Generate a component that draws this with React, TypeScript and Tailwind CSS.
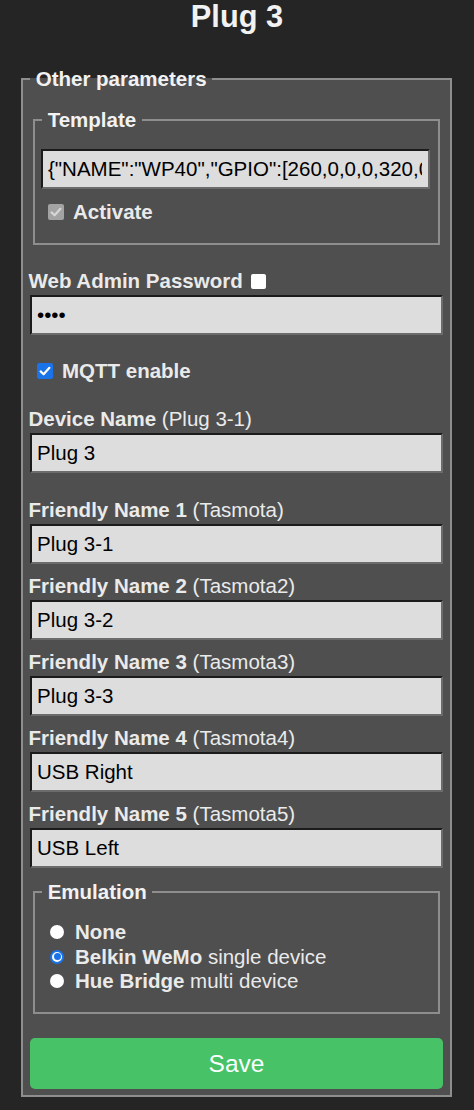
import React from 'react';

const CheckIcon = ({ stroke }: { stroke: string }) => (
  <svg viewBox="0 0 16 16" className="w-full h-full">
    <path d="M3.6 8.4 L6.6 11.3 L12.4 4.8" stroke={stroke} strokeWidth="2.2" fill="none" strokeLinecap="round" strokeLinejoin="round" />
  </svg>
);

const TextInput = ({ value, type = 'text' }: { value: string; type?: string }) => (
  <input
    type={type}
    readOnly
    value={value}
    className="block w-full h-[40px] bg-[#dddddd] text-black text-[20.5px] pl-[5px] pr-[6px] border-2 border-t-[#1b1b1b] border-l-[#1b1b1b] border-b-[#6c6c6c] border-r-[#6c6c6c] outline-none font-['Liberation_Sans',Arial,sans-serif]"
  />
);

const Field = ({ bold, normal, value, top }: { bold: string; normal: string; value: string; top: string }) => (
  <div className={top}>
    <div className="leading-[24px] h-[24px] -ml-[1.5px]">
      <b>{bold}</b> {normal}
    </div>
    <div className="mt-[2px]">
      <TextInput value={value} />
    </div>
  </div>
);

const Radio = ({ checked }: { checked?: boolean }) =>
  checked ? (
    <span className="w-[14px] h-[14px] rounded-full border-[2px] border-[#1a73e8] bg-white flex items-center justify-center shrink-0">
      <span className="w-[7px] h-[7px] rounded-full bg-[#1a73e8]" />
    </span>
  ) : (
    <span className="w-[14px] h-[14px] rounded-full bg-white shrink-0" />
  );

export default function App() {
  return (
    <div className="min-h-[1110px] bg-[#252525] text-[#eaeaea] text-[20.5px] font-['Liberation_Sans',Arial,sans-serif]">
      <h2 className="text-center text-[30.75px] font-bold leading-[34px] text-[#f2f2f2]">Plug 3</h2>

      <fieldset className="mt-[33px] ml-[21px] w-[431px] border-2 border-[#8e8e8e] bg-[#4f4f4f] px-[7px] pb-[6px]">
        <legend className="font-bold leading-[24px] text-[#f2f2f2]">{'\u00a0Other parameters\u00a0'}</legend>

        <fieldset className="mt-[17px] mx-[3px] border-2 border-[#8e8e8e] pl-[6px] pr-[8px] pt-[17px] pb-[19px]">
          <legend className="font-bold leading-[24px] text-[#f2f2f2] ml-[1px]">{'\u00a0Template\u00a0'}</legend>
          <TextInput value={'{"NAME":"WP40","GPIO":[260,0,0,0,320,0,0,0,224,32,0,0,0,0],"FLAG":0,"BASE":18}'} />
          <div className="mt-[11px] h-[24px] flex items-center">
            <span className="ml-[7px] w-[16px] h-[16px] rounded-[2px] bg-[#a3a3a3] shrink-0">
              <CheckIcon stroke="#d6d6d6" />
            </span>
            <b className="ml-[9px] leading-[24px]">Activate</b>
          </div>
        </fieldset>

        <div className="mt-[24px] h-[24px] flex items-center leading-[24px] -ml-[1.5px]">
          <b>Web Admin Password</b>
          <span className="ml-[8px] w-[15px] h-[15px] rounded-[2px] bg-white shrink-0" />
        </div>
        <div className="mt-[2px]">
          <TextInput type="password" value="abcd" />
        </div>

        <div className="mt-[24px] h-[24px] flex items-center">
          <span className="ml-[7px] w-[16px] h-[16px] rounded-[2px] bg-[#1a73e8] shrink-0">
            <CheckIcon stroke="#ffffff" />
          </span>
          <b className="ml-[9px] leading-[24px]">MQTT enable</b>
        </div>

        <Field top="mt-[24px]" bold="Device Name" normal="(Plug 3-1)" value="Plug 3" />
        <Field top="mt-[25px]" bold="Friendly Name 1" normal="(Tasmota)" value="Plug 3-1" />
        <Field top="mt-[10px]" bold="Friendly Name 2" normal="(Tasmota2)" value="Plug 3-2" />
        <Field top="mt-[10px]" bold="Friendly Name 3" normal="(Tasmota3)" value="Plug 3-3" />
        <Field top="mt-[10px]" bold="Friendly Name 4" normal="(Tasmota4)" value="USB Right" />
        <Field top="mt-[10px]" bold="Friendly Name 5" normal="(Tasmota5)" value="USB Left" />

        <fieldset className="mt-[12px] mx-[3px] border-2 border-[#8e8e8e] pl-[6px] pr-[8px] pt-[16px] pb-[18px]">
          <legend className="font-bold leading-[24px] text-[#f2f2f2] ml-[1px]">{'\u00a0Emulation\u00a0'}</legend>
          {[
            { b: 'None', n: '', c: false },
            { b: 'Belkin WeMo', n: 'single device', c: true },
            { b: 'Hue Bridge', n: 'multi device', c: false },
          ].map((r) => (
            <div key={r.b} className="h-[24.5px] flex items-center">
              <span className="ml-[9px] flex">
                <Radio checked={r.c} />
              </span>
              <span className="ml-[11px] leading-[24px] whitespace-nowrap">
                <b>{r.b}</b>
                {r.n ? ' ' + r.n : ''}
              </span>
            </div>
          ))}
        </fieldset>

        <button className="mt-[24px] block w-full h-[51px] rounded-[5px] bg-[#47c266] text-[#faffff] text-[24.5px] leading-[51px] text-center">
          Save
        </button>
      </fieldset>
    </div>
  );
}
